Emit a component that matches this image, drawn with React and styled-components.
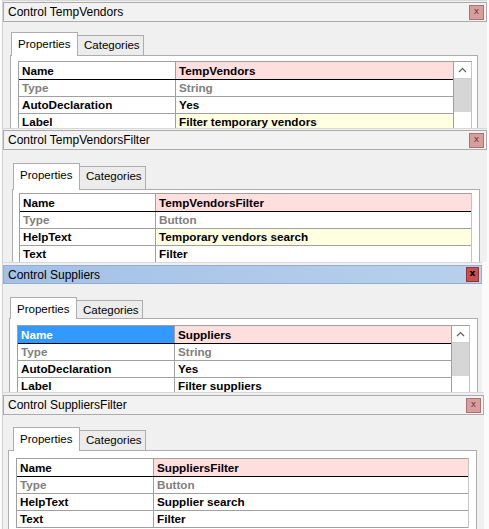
import React from "react";
import styled, { createGlobalStyle, css } from "styled-components";

// page coordinates measured from the reference, one entry per property window
const panels = [
    {
        title: "Control TempVendors",
        y0: 0, h: 128, right: 487, titleTop: 2, titleH: 20,
        tabX: 11, tabsTop: 32, bodyTop: 55, bodyX: 10, bodyR: 477,
        gridX: 18, gridTop: 61, gridR: 470, split: 176, rowH: 17, scroll: true,
        rows: [
            {label: "Name", value: "TempVendors", kind: "name"},
            {label: "Type", value: "String", kind: "type"},
            {label: "AutoDeclaration", value: "Yes"},
            {label: "Label", value: "Filter temporary vendors", kind: "help"},
        ],
    },
    {
        title: "Control TempVendorsFilter",
        y0: 128, h: 134, right: 487, titleTop: 130, titleH: 20,
        tabX: 13, tabsTop: 163, bodyTop: 189, bodyX: 12, bodyR: 479,
        gridX: 19, gridTop: 193, gridR: 470, split: 156, rowH: 17, scroll: false,
        rows: [
            {label: "Name", value: "TempVendorsFilter", kind: "name"},
            {label: "Type", value: "Button", kind: "type"},
            {label: "HelpText", value: "Temporary vendors search", kind: "help"},
            {label: "Text", value: "Filter"},
        ],
    },
    {
        title: "Control Suppliers",
        active: true,
        y0: 262, h: 130, right: 482, titleTop: 265, titleH: 19,
        tabX: 10, tabsTop: 297, bodyTop: 318, bodyX: 9, bodyR: 477,
        gridX: 17, gridTop: 325, gridR: 468, split: 175, rowH: 17, scroll: true,
        rows: [
            {label: "Name", value: "Suppliers", kind: "name", selected: true},
            {label: "Type", value: "String", kind: "type"},
            {label: "AutoDeclaration", value: "Yes"},
            {label: "Label", value: "Filter suppliers"},
        ],
    },
    {
        title: "Control SuppliersFilter",
        y0: 392, h: 137, right: 484, titleTop: 395, titleH: 20,
        tabX: 13, tabsTop: 427, bodyTop: 450, bodyX: 8, bodyR: 476,
        gridX: 16, gridTop: 458, gridR: 467, split: 154, rowH: 17, scroll: false,
        rows: [
            {label: "Name", value: "SuppliersFilter", kind: "name"},
            {label: "Type", value: "Button", kind: "type"},
            {label: "HelpText", value: "Supplier search"},
            {label: "Text", value: "Filter"},
        ],
    },
];

const PropertyWindow = ({p}) => {
    const tabH = p.bodyTop - p.tabsTop + 1;
    return (
        <Frame $w={p.right - 2} $h={p.h} $padTop={p.titleTop - p.y0}>
            <TitleBar $h={p.titleH} $active={p.active}>
                <TitleText>{p.title}</TitleText>
                <CloseButton $active={p.active}>x</CloseButton>
            </TitleBar>
            <TabStrip $left={p.tabX - 3} $top={p.tabsTop - p.titleTop - p.titleH}>
                <Tab $selected $h={tabH}>Properties</Tab>
                <Tab $h={tabH - 3}>Categories</Tab>
            </TabStrip>
            <TabBody
                $left={p.bodyX - 3}
                $w={p.bodyR - p.bodyX + 1}
                $padTop={p.gridTop - p.bodyTop - 1}
                $padLeft={p.gridX - p.bodyX - 1}
            >
                <GridBox $w={p.gridR - p.gridX}>
                    <Table>
                        {p.rows.map(r => (
                            <Row key={r.label} $label={p.split - p.gridX - 1} $h={r.kind === "name" ? p.rowH + 1 : p.rowH} $name={r.kind === "name"}>
                                <LabelCell $kind={r.kind} $selected={r.selected}>{r.label}</LabelCell>
                                <ValueCell $kind={r.kind}>{r.value}</ValueCell>
                            </Row>
                        ))}
                    </Table>
                    {p.scroll && (
                        <ScrollBar>
                            <ScrollArrow>
                                <svg width="9" height="6" viewBox="0 0 9 6">
                                    <polyline points="1,5 4.5,1.5 8,5" fill="none" stroke="#606060" strokeWidth="1.2"/>
                                </svg>
                            </ScrollArrow>
                            <ScrollThumb/>
                        </ScrollBar>
                    )}
                </GridBox>
            </TabBody>
        </Frame>
    );
};

const App = () => (
    <>
        <GlobalStyle/>
        <Stack>
            {panels.map(p => <PropertyWindow key={p.title} p={p}/>)}
        </Stack>
    </>
);

export default App;

const GlobalStyle = createGlobalStyle`
    html, body {
        margin: 0;
        padding: 0;
        background: #fbfbfb;
    }
    body {
        font-family: "Liberation Sans", Arial, sans-serif;
    }
`

const Stack = styled.div`
    display: flex;
    flex-direction: column;
    width: 489px;
    height: 529px;
    overflow: hidden;
`

const Frame = styled.div`
    box-sizing: border-box;
    flex-shrink: 0;
    display: flex;
    flex-direction: column;
    width: ${p => p.$w}px;
    height: ${p => p.$h}px;
    margin-left: 2px;
    padding-top: ${p => p.$padTop}px;
    overflow: hidden;
    background: #f0f0f0;
    border-left: 1px solid #d2d2d2;
    border-top: 1px solid #d8d8d8;
`

const TitleBar = styled.div`
    box-sizing: border-box;
    flex-shrink: 0;
    display: flex;
    align-items: center;
    justify-content: space-between;
    height: ${p => p.$h}px;
    margin-top: -1px;
    border: 1px solid #ababab;
    background: #f2f2f2;
    padding: 0 2px 0 4px;
    ${p => p.$active && css`
        background: linear-gradient(to right, #a3c1e6, #b8d0ec);
        border-color: #93aed0;
    `}
`

const TitleText = styled.span`
    font-size: 12px;
    color: #000;
    line-height: 1;
`

const CloseButton = styled.span`
    box-sizing: border-box;
    display: flex;
    align-items: center;
    justify-content: center;
    width: 15px;
    height: 15px;
    font-family: "DejaVu Sans", sans-serif;
    font-size: 9px;
    line-height: 1;
    padding-bottom: 2px;
    color: #6a3a3a;
    background: #d89e9e;
    border: 1px solid #a87272;
    ${p => p.$active && css`
        width: 13px;
        color: #000;
        font-weight: bold;
        background: #c75050;
        border-color: #8e3434;
    `}
`

const TabStrip = styled.div`
    flex-shrink: 0;
    display: flex;
    align-items: flex-end;
    margin-left: ${p => p.$left}px;
    margin-top: ${p => p.$top}px;
    margin-bottom: -1px;
    position: relative;
    z-index: 1;
`

const Tab = styled.div`
    box-sizing: border-box;
    width: 66px;
    height: ${p => p.$h}px;
    padding: 3px 0 0 6px;
    font-size: 11.5px;
    color: #000;
    background: #ececec;
    border: 1px solid #adadad;
    border-left: none;
    ${p => p.$selected && css`
        width: 67px;
        padding-top: 5px;
        background: #fff;
        border-left: 1px solid #adadad;
        border-bottom: none;
    `}
`

const TabBody = styled.div`
    box-sizing: border-box;
    flex-shrink: 0;
    height: 200px;
    width: ${p => p.$w}px;
    margin-left: ${p => p.$left}px;
    padding-top: ${p => p.$padTop}px;
    padding-left: ${p => p.$padLeft}px;
    background: #fff;
    border: 1px solid #adadad;
`

const GridBox = styled.div`
    display: flex;
    width: ${p => p.$w}px;
    border-left: 1px solid #a0a0a0;
    border-top: 1px solid #a0a0a0;
    border-right: 1px solid #c4c4c4;
`

const Table = styled.div`
    flex: 1;
    display: flex;
    flex-direction: column;
`

const Row = styled.div`
    box-sizing: border-box;
    display: grid;
    grid-template-columns: ${p => p.$label}px 1fr;
    height: ${p => p.$h}px;
    border-bottom: 1px solid ${p => p.$name ? "#000" : "#a0a0a0"};
    font-size: 11.7px;
    font-weight: bold;
    line-height: ${p => p.$h - 1}px;
    white-space: nowrap;
`

const LabelCell = styled.div`
    padding-left: 3px;
    border-right: 1px solid #a0a0a0;
    color: ${p => p.$kind === "type" ? "#808080" : "#000"};
    ${p => p.$selected && css`
        color: #fff;
        background: #3399ff;
    `}
`

const valueBg = {name: "#ffdede", help: "#ffffe1"};

const ValueCell = styled.div`
    padding-left: 3px;
    color: ${p => p.$kind === "type" ? "#808080" : "#000"};
    background: ${p => valueBg[p.$kind] || "#fff"};
`

const ScrollBar = styled.div`
    width: 17px;
    display: flex;
    flex-direction: column;
    border-left: 1px solid #a0a0a0;
    background: #fff;
`

const ScrollArrow = styled.div`
    box-sizing: border-box;
    height: 17px;
    display: flex;
    align-items: center;
    justify-content: center;
    border-bottom: 1px solid #cfcfcf;
    background: #fff;
`

const ScrollThumb = styled.div`
    height: 33px;
    background: #d6d6d6;
`
